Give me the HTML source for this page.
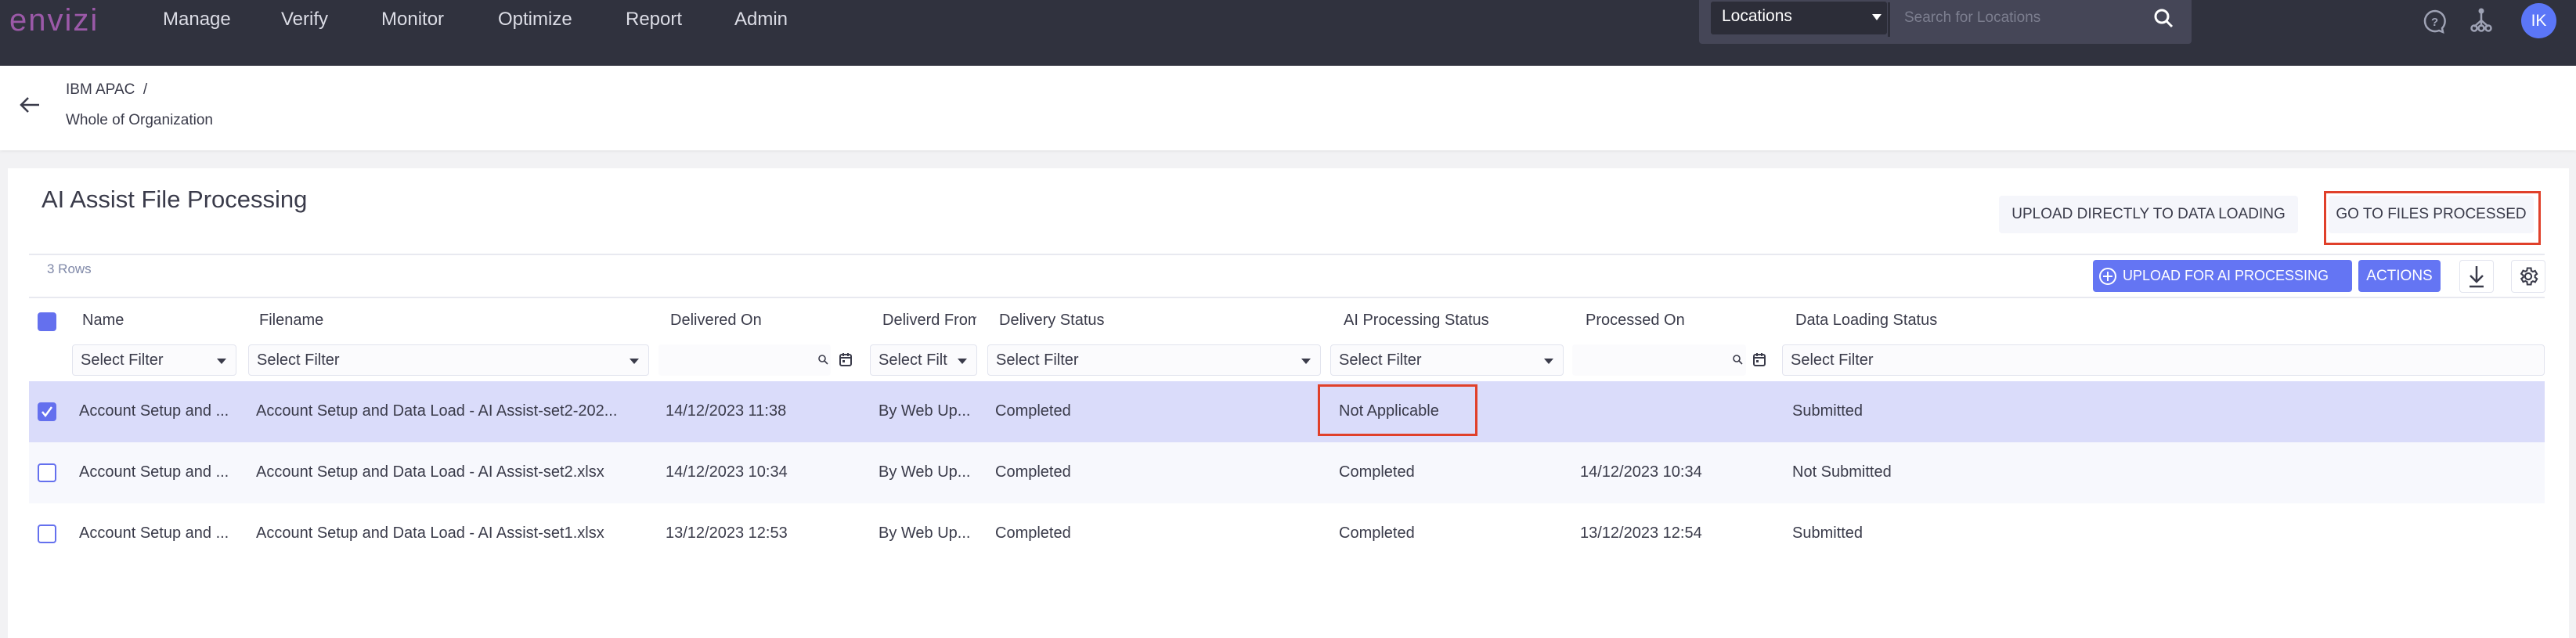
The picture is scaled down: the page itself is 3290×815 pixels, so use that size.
<!DOCTYPE html>
<html><head><meta charset="utf-8"><style>
*{margin:0;padding:0;box-sizing:border-box}
body{width:3290px;height:790px;position:relative;overflow:hidden;background:#f2f2f4;font-family:"Liberation Sans",sans-serif;color:#3a3b4a}
.a{position:absolute;white-space:nowrap}
.nav{left:0;top:0;width:3290px;height:84px;background:#30323e}
.ni{top:11px;font-size:24px;color:#dcdde6}
.logo{left:12px;top:4px;font-size:40px;color:#9b59a8;letter-spacing:2px;font-weight:normal}
.bc{left:0;top:84px;width:3290px;height:108px;background:#fff;box-shadow:0 2px 4px rgba(0,0,0,.05)}
.card{left:10px;top:215px;width:3271px;height:600px;background:#fff}
.th{top:398px;font-size:20px;color:#3a3b4a}
.flt{top:440px;height:40px;border:1px solid #e2e4ee;border-radius:4px;background:#fbfbfd;font-size:20px;padding:8px 10px;color:#3a3b4a;overflow:hidden}
.flt .car{position:absolute;right:12px;top:17px;border-left:6px solid transparent;border-right:6px solid transparent;border-top:7px solid #3a3b4a}
.row{left:37px;width:3213px;height:78px}
.td{font-size:20px;color:#3a3b4a}
.cb{width:24px;height:24px;border:2px solid #6470ee;border-radius:4px;background:#fff}
.btn{font-size:19px;color:#3a3b4a;background:#f5f6fb;border-radius:4px;text-align:center;line-height:48px}
</style></head><body>
<div class="a nav"></div>
<div class="a logo">envizi</div>
<div class="a ni" style="left:208px">Manage</div>
<div class="a ni" style="left:359px">Verify</div>
<div class="a ni" style="left:487px">Monitor</div>
<div class="a ni" style="left:636px">Optimize</div>
<div class="a ni" style="left:799px">Report</div>
<div class="a ni" style="left:938px">Admin</div>
<div class="a" style="left:2170px;top:0;width:629px;height:56px;background:#454657;border-radius:0 0 4px 4px"></div>
<div class="a" style="left:2185px;top:2px;width:225px;height:42px;background:#2c2d38;border-radius:3px"></div>
<div class="a" style="left:2199px;top:9px;font-size:21px;color:#fff">Locations</div>
<div class="a" style="left:2391px;top:18px;border-left:6px solid transparent;border-right:6px solid transparent;border-top:8px solid #fff"></div>
<div class="a" style="left:2411px;top:3px;width:3px;height:44px;background:#2c2d38"></div>
<div class="a" style="left:2432px;top:12px;font-size:19px;color:#7c7e8f">Search for Locations</div>
<svg class="a" style="left:2750px;top:10px" width="28" height="28" viewBox="0 0 28 28"><circle cx="11" cy="11" r="8" fill="none" stroke="#fff" stroke-width="3"/><line x1="17" y1="17" x2="24" y2="24" stroke="#fff" stroke-width="3"/></svg>
<svg class="a" style="left:3094px;top:12px" width="34" height="32" viewBox="0 0 34 32"><path d="M16 2a13 13 0 1 0 5 25l5 2-1-5A13 13 0 0 0 16 2z" fill="none" stroke="#9ea2b4" stroke-width="2.5"/><text x="11" y="21" font-size="15" font-weight="bold" fill="#9ea2b4" font-family="Liberation Sans">?</text></svg>
<svg class="a" style="left:3154px;top:10px" width="30" height="32" viewBox="0 0 30 32"><circle cx="15" cy="4" r="3.5" fill="#9ea2b4"/><path d="M15 6v10M15 16l-9 8M15 16v8M15 16l9 8" stroke="#9ea2b4" stroke-width="2.5" fill="none"/><circle cx="6" cy="26" r="3.5" fill="none" stroke="#9ea2b4" stroke-width="2.5"/><circle cx="15" cy="26" r="3.5" fill="none" stroke="#9ea2b4" stroke-width="2.5"/><circle cx="24" cy="26" r="3.5" fill="none" stroke="#9ea2b4" stroke-width="2.5"/></svg>
<div class="a" style="left:3220px;top:4px;width:45px;height:45px;border-radius:50%;background:#5b76f7;color:#fff;font-size:21px;text-align:center;line-height:45px">IK</div>

<div class="a bc"></div>
<svg class="a" style="left:24px;top:122px" width="28" height="24" viewBox="0 0 28 24"><path d="M26 12H4M12 3L3 12l9 9" fill="none" stroke="#3a3b4a" stroke-width="2.5"/></svg>
<div class="a" style="left:84px;top:104px;font-size:19px">IBM APAC &nbsp;/</div>
<div class="a" style="left:84px;top:143px;font-size:19px">Whole of Organization</div>

<div class="a card"></div>
<div class="a" style="left:53px;top:237px;font-size:31px;color:#3a3b4a">AI Assist File Processing</div>
<div class="a btn" style="left:2553px;top:250px;width:382px">UPLOAD DIRECTLY TO DATA LOADING</div>
<div class="a btn" style="left:2974px;top:250px;width:262px">GO TO FILES PROCESSED</div>
<div class="a" style="left:2968px;top:244px;width:277px;height:69px;border:3px solid #e0402a"></div>
<div class="a" style="left:37px;top:324px;width:3213px;height:2px;background:#e8e9f0"></div>
<div class="a" style="left:60px;top:334px;font-size:17px;color:#7f88a8">3 Rows</div>
<div class="a" style="left:2673px;top:332px;width:331px;height:41px;background:#6475f3;border-radius:4px;color:#fff;font-size:18px;line-height:41px;padding-left:38px">UPLOAD FOR AI PROCESSING</div>
<svg class="a" style="left:2680px;top:341px" width="24" height="24" viewBox="0 0 24 24"><circle cx="12" cy="12" r="10" fill="none" stroke="#fff" stroke-width="2"/><path d="M12 6v12M6 12h12" stroke="#fff" stroke-width="2"/></svg>
<div class="a" style="left:3012px;top:332px;width:105px;height:41px;background:#6475f3;border-radius:4px;color:#fff;font-size:19px;line-height:41px;text-align:center">ACTIONS</div>
<div class="a" style="left:3141px;top:332px;width:44px;height:42px;border:1px solid #e2e4ee;border-radius:4px"></div>
<svg class="a" style="left:3151px;top:338px" width="24" height="30" viewBox="0 0 24 30"><path d="M12 2v20M4 14l8 8 8-8M3 28h18" fill="none" stroke="#3a3b4a" stroke-width="2.5"/></svg>
<div class="a" style="left:3207px;top:332px;width:44px;height:42px;border:1px solid #e2e4ee;border-radius:4px"></div>
<svg class="a" style="left:3215px;top:339px" width="28" height="28" viewBox="0 0 24 24"><path d="M12 15.5A3.5 3.5 0 1 0 12 8.5a3.5 3.5 0 0 0 0 7zM19.4 13a7.5 7.5 0 0 0 0-2l2.1-1.6-2-3.5-2.5 1a7.5 7.5 0 0 0-1.7-1L15 3h-4l-.4 2.7a7.5 7.5 0 0 0-1.7 1l-2.5-1-2 3.5L6.6 11a7.5 7.5 0 0 0 0 2l-2.1 1.6 2 3.5 2.5-1a7.5 7.5 0 0 0 1.7 1L11 21h4l.4-2.7a7.5 7.5 0 0 0 1.7-1l2.5 1 2-3.5z" fill="none" stroke="#3a3b4a" stroke-width="1.8"/></svg>
<div class="a" style="left:37px;top:379px;width:3213px;height:2px;background:#e8e9f0"></div>

<div class="a cb" style="left:48px;top:399px;background:#6470ee;border-color:#6470ee"></div>
<div class="a th" style="left:105px">Name</div>
<div class="a th" style="left:331px">Filename</div>
<div class="a th" style="left:856px">Delivered On</div>
<div class="a th" style="left:1127px;width:120px;overflow:hidden">Deliverd From</div>
<div class="a th" style="left:1276px">Delivery Status</div>
<div class="a th" style="left:1716px">AI Processing Status</div>
<div class="a th" style="left:2025px">Processed On</div>
<div class="a th" style="left:2293px">Data Loading Status</div>

<div class="a flt" style="left:92px;width:210px">Select Filter<span class="car"></span></div>
<div class="a flt" style="left:317px;width:512px">Select Filter<span class="car"></span></div>
<div class="a flt" style="left:841px;width:220px;border-color:#fbfbfd"></div>
<svg class="a" style="left:1044px;top:452px" width="14" height="14" viewBox="0 0 14 14"><circle cx="6" cy="6" r="4" fill="none" stroke="#3a3b4a" stroke-width="1.6"/><line x1="9" y1="9" x2="13" y2="13" stroke="#3a3b4a" stroke-width="1.6"/></svg>
<svg class="a" style="left:1071px;top:449px" width="18" height="20" viewBox="0 0 18 20"><rect x="2" y="4" width="14" height="14" rx="2" fill="none" stroke="#3a3b4a" stroke-width="2"/><path d="M2 8h14M6 2v4M12 2v4" stroke="#3a3b4a" stroke-width="2"/><rect x="5" y="11" width="3" height="3" fill="#3a3b4a"/></svg>
<div class="a flt" style="left:1111px;width:137px">Select Filt<span class="car"></span></div>
<div class="a flt" style="left:1261px;width:426px">Select Filter<span class="car"></span></div>
<div class="a flt" style="left:1699px;width:298px">Select Filter<span class="car"></span></div>
<div class="a flt" style="left:2008px;width:222px;border-color:#fbfbfd"></div>
<svg class="a" style="left:2212px;top:452px" width="14" height="14" viewBox="0 0 14 14"><circle cx="6" cy="6" r="4" fill="none" stroke="#3a3b4a" stroke-width="1.6"/><line x1="9" y1="9" x2="13" y2="13" stroke="#3a3b4a" stroke-width="1.6"/></svg>
<svg class="a" style="left:2238px;top:449px" width="18" height="20" viewBox="0 0 18 20"><rect x="2" y="4" width="14" height="14" rx="2" fill="none" stroke="#3a3b4a" stroke-width="2"/><path d="M2 8h14M6 2v4M12 2v4" stroke="#3a3b4a" stroke-width="2"/><rect x="5" y="11" width="3" height="3" fill="#3a3b4a"/></svg>
<div class="a flt" style="left:2276px;width:974px">Select Filter</div>

<div class="a row" style="top:487px;background:#dadcfa"></div>
<div class="a row" style="top:565px;background:#f7f8fd"></div>
<div class="a row" style="top:643px;background:#fff"></div>

<div class="a cb" style="left:48px;top:514px;background:#6470ee"></div>
<svg class="a" style="left:51px;top:517px" width="18" height="18" viewBox="0 0 18 18"><path d="M3 9l4 5 8-11" fill="none" stroke="#fff" stroke-width="2.5"/></svg>
<div class="a cb" style="left:48px;top:592px"></div>
<div class="a cb" style="left:48px;top:670px"></div>

<div class="a td" style="left:101px;top:514px">Account Setup and ...</div>
<div class="a td" style="left:327px;top:514px">Account Setup and Data Load - AI Assist-set2-202...</div>
<div class="a td" style="left:850px;top:514px">14/12/2023 11:38</div>
<div class="a td" style="left:1122px;top:514px">By Web Up...</div>
<div class="a td" style="left:1271px;top:514px">Completed</div>
<div class="a td" style="left:1710px;top:514px">Not Applicable</div>
<div class="a td" style="left:2289px;top:514px">Submitted</div>
<div class="a" style="left:1683px;top:491px;width:204px;height:66px;border:3px solid #e0402a"></div>

<div class="a td" style="left:101px;top:592px">Account Setup and ...</div>
<div class="a td" style="left:327px;top:592px">Account Setup and Data Load - AI Assist-set2.xlsx</div>
<div class="a td" style="left:850px;top:592px">14/12/2023 10:34</div>
<div class="a td" style="left:1122px;top:592px">By Web Up...</div>
<div class="a td" style="left:1271px;top:592px">Completed</div>
<div class="a td" style="left:1710px;top:592px">Completed</div>
<div class="a td" style="left:2018px;top:592px">14/12/2023 10:34</div>
<div class="a td" style="left:2289px;top:592px">Not Submitted</div>

<div class="a td" style="left:101px;top:670px">Account Setup and ...</div>
<div class="a td" style="left:327px;top:670px">Account Setup and Data Load - AI Assist-set1.xlsx</div>
<div class="a td" style="left:850px;top:670px">13/12/2023 12:53</div>
<div class="a td" style="left:1122px;top:670px">By Web Up...</div>
<div class="a td" style="left:1271px;top:670px">Completed</div>
<div class="a td" style="left:1710px;top:670px">Completed</div>
<div class="a td" style="left:2018px;top:670px">13/12/2023 12:54</div>
<div class="a td" style="left:2289px;top:670px">Submitted</div>
</body></html>
